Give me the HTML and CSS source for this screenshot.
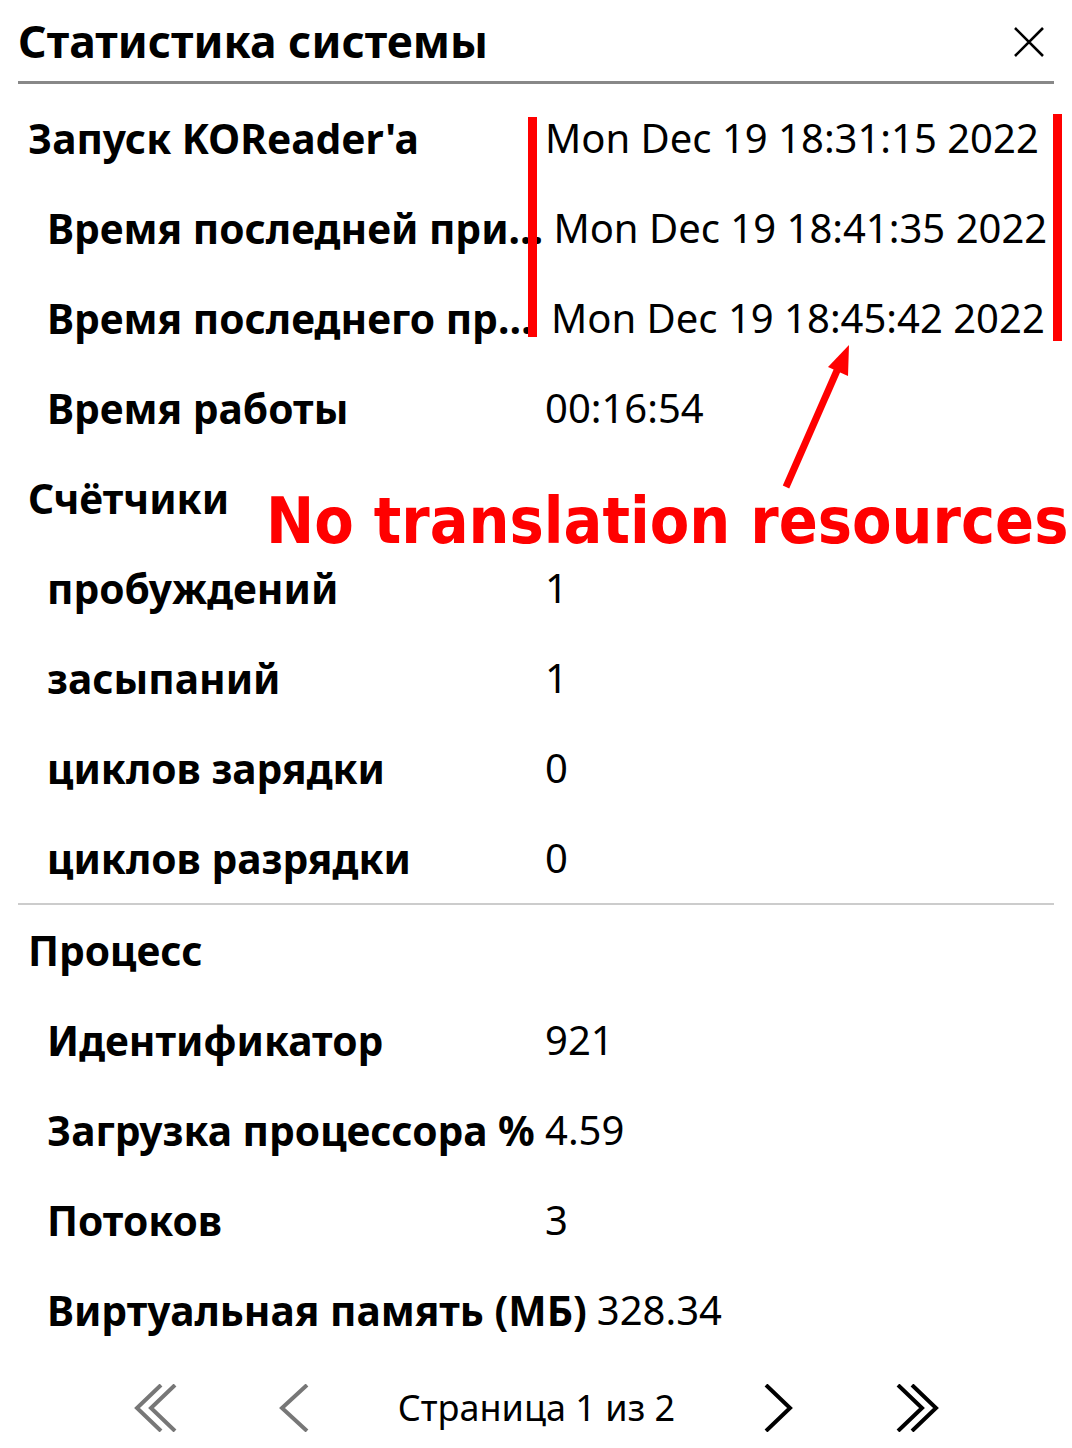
FILE: index.html
```html
<!DOCTYPE html>
<html lang="ru">
<head>
    <meta charset="UTF-8">
    <meta name="viewport" content="width=device-width, initial-scale=1.0">
    <title>Статистика системы</title>
    <link rel="stylesheet" href="styles.css">
</head>
<body>
    <div class="page">
        <div class="title-bar">
            <h1 class="title">Статистика системы</h1>
            <button class="close" aria-label="Закрыть">
                <svg width="30" height="30" viewBox="0 0 30 30">
                    <path d="M1 1 L29 29 M29 1 L1 29" stroke="#000" stroke-width="2.6" fill="none"/>
                </svg>
            </button>
        </div>

        <div class="list">
            <div class="row"><span class="key">Запуск KOReader'a</span><span class="val">Mon Dec 19 18:31:15 2022</span></div>
            <div class="row sub cut"><span class="key">Время последней при…</span><span class="val">Mon Dec 19 18:41:35 2022</span></div>
            <div class="row sub cut"><span class="key">Время последнего пр…</span><span class="val">Mon Dec 19 18:45:42 2022</span></div>
            <div class="row sub"><span class="key">Время работы</span><span class="val">00:16:54</span></div>
            <div class="row"><span class="key">Счётчики</span><span class="val"></span></div>
            <div class="row sub"><span class="key">пробуждений</span><span class="val">1</span></div>
            <div class="row sub"><span class="key">засыпаний</span><span class="val">1</span></div>
            <div class="row sub"><span class="key">циклов зарядки</span><span class="val">0</span></div>
            <div class="row sub"><span class="key">циклов разрядки</span><span class="val">0</span></div>
        </div>

        <hr class="sep">

        <div class="list">
            <div class="row"><span class="key">Процесс</span><span class="val"></span></div>
            <div class="row sub"><span class="key">Идентификатор</span><span class="val">921</span></div>
            <div class="row sub"><span class="key">Загрузка процессора %</span><span class="val">4.59</span></div>
            <div class="row sub"><span class="key">Потоков</span><span class="val">3</span></div>
            <div class="row sub"><span class="key">Виртуальная память (МБ)</span><span class="val">328.34</span></div>
        </div>

        <div class="pager">
            <svg class="pg-btn off" width="48" height="48" viewBox="0 0 48 48">
                <polyline points="29,1 5,24 29,47"/>
                <polyline points="43,1 19,24 43,47"/>
            </svg>
            <svg class="pg-btn off" width="48" height="48" viewBox="0 0 48 48">
                <polyline points="37,1 12,24 37,47"/>
            </svg>
            <div class="pg-text">Страница 1 из 2</div>
            <svg class="pg-btn" width="48" height="48" viewBox="0 0 48 48">
                <polyline points="10,1 34,24 10,47"/>
            </svg>
            <svg class="pg-btn" width="48" height="48" viewBox="0 0 48 48">
                <polyline points="19,1 43,24 19,47"/>
                <polyline points="5,1 29,24 5,47"/>
            </svg>
        </div>

        <!-- пометки поверх скриншота -->
        <svg class="marks" width="1072" height="1448" viewBox="0 0 1072 1448">
            <rect x="528" y="117" width="9" height="220" fill="#f00"/>
            <rect x="1053" y="114" width="9" height="227" fill="#f00"/>
            <line x1="786" y1="487" x2="839" y2="366" stroke="#f00" stroke-width="7"/>
            <polygon points="849,345 828,367 848,376" fill="#f00"/>
        </svg>
        <div class="note">No translation resources</div>
    </div>
</body>
</html>
```

FILE: styles.css
```css
body {
    margin: 0;
    background-color: #fff;
    color: #000;
    font-family: "Noto Sans", "Open Sans", sans-serif;
}

.page {
    position: relative;
    width: 1072px;
    height: 1448px;
    padding: 0 18px;
    box-sizing: border-box;
    overflow: hidden;
}

/* заголовок */
.title-bar {
    display: flex;
    justify-content: space-between;
    align-items: center;
    height: 81px;
    border-bottom: 3px solid #888;
}

.title {
    margin: 0;
    font-size: 44.5px;
    font-weight: bold;
    line-height: 58px;
}

.close {
    border: none;
    background: none;
    padding: 0;
    margin: 3px 10px 0 0;
    display: flex;
}

/* строки ключ-значение */
.list {
    display: flex;
    flex-direction: column;
}

.title-bar + .list {
    margin-top: 9px;
}

.row {
    display: flex;
    align-items: center;
    height: 90px;
    padding-left: 10px;
    font-size: 40px;
    line-height: 90px;
    white-space: nowrap;
}

.row.sub {
    padding-left: 29px;
}

.key {
    font-weight: bold;
    font-size: 40.7px;
    min-width: 507px;
    margin-right: 10px;
}

.row.sub .key {
    min-width: 488px;
}

/* обрезанный ключ занимает всю колонку */
.row.cut .key {
    min-width: 494px;
}

.val {
    font-weight: normal;
}

.sep {
    margin: 0;
    border: none;
    height: 2px;
    background-color: #ccc;
}

/* листание страниц */
.pager {
    display: flex;
    justify-content: center;
    align-items: center;
    padding-top: 29px;
}

.pg-btn {
    fill: none;
    stroke: #000;
    stroke-width: 4;
    flex: none;
}

.pg-btn.off {
    stroke: #777;
}

.pager .pg-btn:first-child {
    margin-right: 90px;
}

.pager .pg-btn:last-child {
    margin-left: 89px;
}

.pg-text {
    width: 320px;
    margin: 0 59px;
    text-align: center;
    font-size: 36px;
    line-height: 48px;
    white-space: nowrap;
}

/* красные пометки */
.marks {
    position: absolute;
    left: 0;
    top: 0;
    pointer-events: none;
}

.note {
    position: absolute;
    left: 266px;
    top: 490px;
    color: #f00;
    font-family: "DejaVu Sans Condensed", "DejaVu Sans", sans-serif;
    font-stretch: condensed;
    font-weight: bold;
    font-size: 64px;
    line-height: 63px;
    white-space: nowrap;
}
```
